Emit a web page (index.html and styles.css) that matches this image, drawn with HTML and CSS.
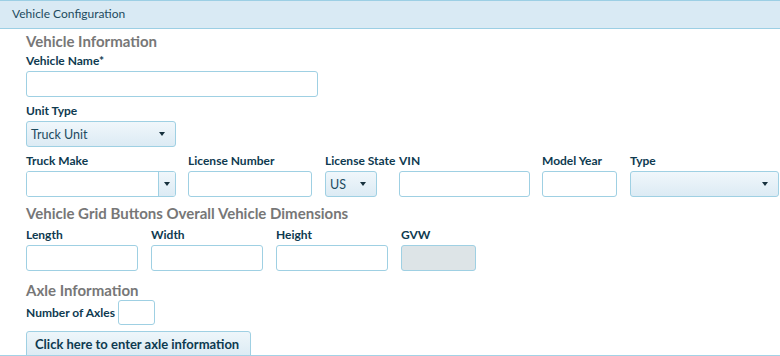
FILE: index.html
```html
<!DOCTYPE html>
<html lang="en">
    <head>
        <meta charset="UTF-8">
        <title>Vehicle Configuration</title>
        <link rel="stylesheet" href="styles.css">
    </head>
    <body>
        <div class="panel">
            <div class="panel-title">Vehicle Configuration</div>
            <div class="panel-body">
                <h2 class="section section-top">Vehicle Information</h2>

                <div class="field w-name">
                    <label>Vehicle Name*</label>
                    <input type="text" class="txt">
                </div>

                <div class="field w-unit">
                    <label>Unit Type</label>
                    <div class="select"><span>Truck Unit</span><i class="arrow"></i></div>
                </div>

                <div class="row">
                    <div class="field w-make">
                        <label>Truck Make</label>
                        <div class="combo"><input type="text"><span class="combo-btn"><i class="arrow"></i></span></div>
                    </div>
                    <div class="field w-lic">
                        <label>License Number</label>
                        <input type="text" class="txt">
                    </div>
                    <div class="field w-state">
                        <label>License State</label>
                        <div class="select"><span>US</span><i class="arrow"></i></div>
                    </div>
                    <div class="field w-vin">
                        <label>VIN</label>
                        <input type="text" class="txt">
                    </div>
                    <div class="field w-year">
                        <label>Model Year</label>
                        <input type="text" class="txt">
                    </div>
                    <div class="field w-type">
                        <label>Type</label>
                        <div class="select"><span></span><i class="arrow"></i></div>
                    </div>
                </div>

                <h2 class="section">Vehicle Grid Buttons Overall Vehicle Dimensions</h2>

                <div class="row">
                    <div class="field w-dim">
                        <label>Length</label>
                        <input type="text" class="txt">
                    </div>
                    <div class="field w-dim">
                        <label>Width</label>
                        <input type="text" class="txt">
                    </div>
                    <div class="field w-dim">
                        <label>Height</label>
                        <input type="text" class="txt">
                    </div>
                    <div class="field w-gvw">
                        <label>GVW</label>
                        <input type="text" class="txt" disabled>
                    </div>
                </div>

                <h2 class="section section-axle">Axle Information</h2>

                <div class="axle-row">
                    <label>Number of Axles</label>
                    <input type="text" class="txt axles">
                </div>
                <button class="axle-btn">Click here to enter axle information</button>
            </div>
        </div>
    </body>
</html>
```

FILE: styles.css
```css
* {
    box-sizing: border-box;
}

body {
    margin: 0;
    font-family: Lato, "Open Sans", sans-serif;
    background-color: white;
    overflow: hidden;
}

.panel {
    width: 780px;
    height: 356px;
    border-bottom: 1px solid #a3d2e6;
    overflow: hidden;
}

.panel-title {
    height: 29px;
    padding: 5px 12px 0;
    background-color: #d9eaf4;
    border-top: 1px solid #9ccfe4;
    border-bottom: 1px solid #9ccfe4;
    color: #1d4a5e;
    font-size: 12px;
    line-height: 16px;
}

.panel-body {
    padding-left: 26px;
}

.section {
    margin: 1px 0 5px;
    font-size: 15px;
    line-height: 18px;
    font-weight: bold;
    color: #777;
}

.section-top {
    margin: 3px 0 3px;
}

.section-axle {
    margin: 4px 0 1px;
}

.field {
    margin-bottom: 6px;
}

.field label,
.axle-row label {
    display: block;
    height: 16px;
    margin-bottom: 2px;
    font-size: 12px;
    line-height: 16px;
    font-weight: bold;
    color: #0e3a50;
    white-space: nowrap;
}

.txt {
    display: block;
    width: 100%;
    height: 26px;
    margin: 0;
    border: 1px solid #9fd0e3;
    border-radius: 3px;
    background-color: white;
    font-family: inherit;
    font-size: 12px;
}

.txt:disabled {
    background-color: #dde4e7;
}

.select {
    display: flex;
    align-items: center;
    justify-content: space-between;
    height: 26px;
    padding: 0 10px 0 4px;
    border: 1px solid #9fd0e3;
    border-radius: 3px;
    background: linear-gradient(#f0f7fb, #dcebf4);
    color: #1d4a5e;
    font-size: 12.5px;
}

.arrow {
    width: 0;
    height: 0;
    border-left: 3px solid transparent;
    border-right: 3px solid transparent;
    border-top: 4px solid #16303d;
}

.combo {
    display: flex;
    height: 26px;
    border: 1px solid #9fd0e3;
    border-radius: 3px;
    overflow: hidden;
}

.combo input {
    flex-grow: 1;
    min-width: 0;
    border: none;
}

.combo-btn {
    display: flex;
    align-items: center;
    justify-content: center;
    width: 24px;
    border-left: 1px solid #9fd0e3;
    background: linear-gradient(#f0f7fb, #dcebf4);
}

.row {
    display: flex;
}

.w-name { width: 292px; }
.w-unit { width: 150px; }
.w-make { width: 150px; margin-right: 12px; }
.w-lic { width: 124px; margin-right: 13px; }
.w-state { width: 52px; margin-right: 22px; }
.w-vin { width: 131px; margin-right: 12px; }
.w-year { width: 75px; margin-right: 13px; }
.w-type { width: 149px; }
.w-dim { width: 112px; margin-right: 13px; }
.w-gvw { width: 75px; }

.axle-row {
    display: flex;
    align-items: center;
}

.axle-row label {
    margin: 0 3px 0 0;
}

.txt.axles {
    width: 37px;
    height: 25px;
}

.axle-btn {
    display: block;
    width: 225px;
    height: 26px;
    margin-top: 6px;
    padding: 0 0 0 8px;
    border: 1px solid #9fd0e3;
    border-radius: 3px 3px 0 0;
    background: linear-gradient(#eef6fa, #dcebf4);
    color: #0e3a50;
    font-family: inherit;
    font-size: 13px;
    font-weight: bold;
    text-align: left;
}
```
